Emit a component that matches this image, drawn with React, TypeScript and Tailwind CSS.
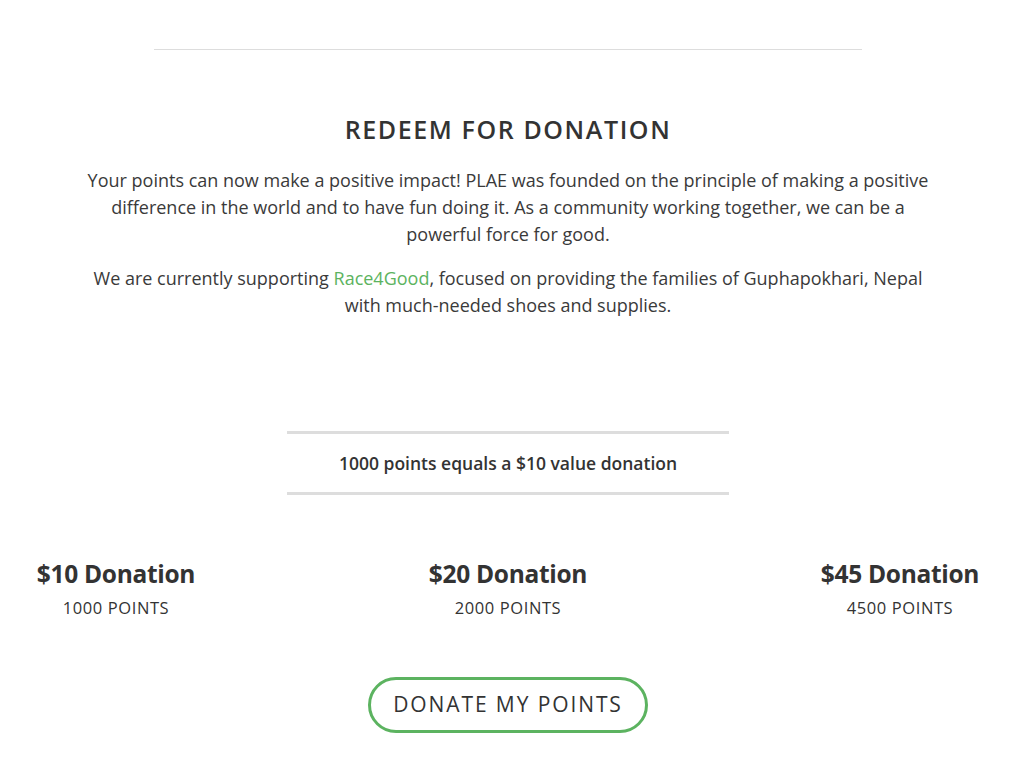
export default function App() {
  const options = [
    { amount: '$10 Donation', points: '1000 POINTS' },
    { amount: '$20 Donation', points: '2000 POINTS' },
    { amount: '$45 Donation', points: '4500 POINTS' },
  ];
  return (
    <div className="w-[1016px] bg-white text-[#333] font-['Open_Sans',sans-serif]">
      <div className="mx-auto w-[708px] pt-[49px]">
        <hr className="border-t border-[#dddddd]" />
      </div>

      <section className="pt-[64px] text-center">
        <h2 className="text-[25px] font-semibold tracking-[1.6px] uppercase leading-[30px]">Redeem for Donation</h2>
        <p className="mx-auto mt-[23px] w-[960px] text-[18px] leading-[27px] text-[#3a3a3a]">
          Your points can now make a positive impact! PLAE was founded on the principle of making a positive<br />
          difference in the world and to have fun doing it. As a community working together, we can be a<br />
          powerful force for good.
        </p>
        <p className="mx-auto mt-[17px] w-[960px] text-[18px] leading-[27px] text-[#3a3a3a]">
          We are currently supporting <a className="text-[#5cb360]">Race4Good</a>, focused on providing the families of Guphapokhari, Nepal<br />
          with much-needed shoes and supplies.
        </p>
      </section>

      <div className="mx-auto mt-[112px] w-[442px] border-y-[3px] border-[#dddddd] py-[18px] text-center text-[17.5px] font-semibold leading-[22px]">
        1000 points equals a $10 value donation
      </div>

      <div className="mt-[64px] flex justify-between">
        {options.map(o => (
          <div key={o.amount} className="w-[232px] text-center">
            <div className="text-[24.5px] font-bold leading-[30px] tracking-[-0.3px]">{o.amount}</div>
            <div className="mt-[8px] text-[16.5px] leading-[22px] tracking-[0.6px]">{o.points}</div>
          </div>
        ))}
      </div>

      <div className="mt-[58px] flex justify-center pb-[33px]">
        <button className="h-[56px] w-[280px] rounded-full border-[3px] border-[#5cb360] text-[21px] tracking-[1.9px] uppercase text-[#333]">
          Donate my points
        </button>
      </div>
    </div>
  );
}
